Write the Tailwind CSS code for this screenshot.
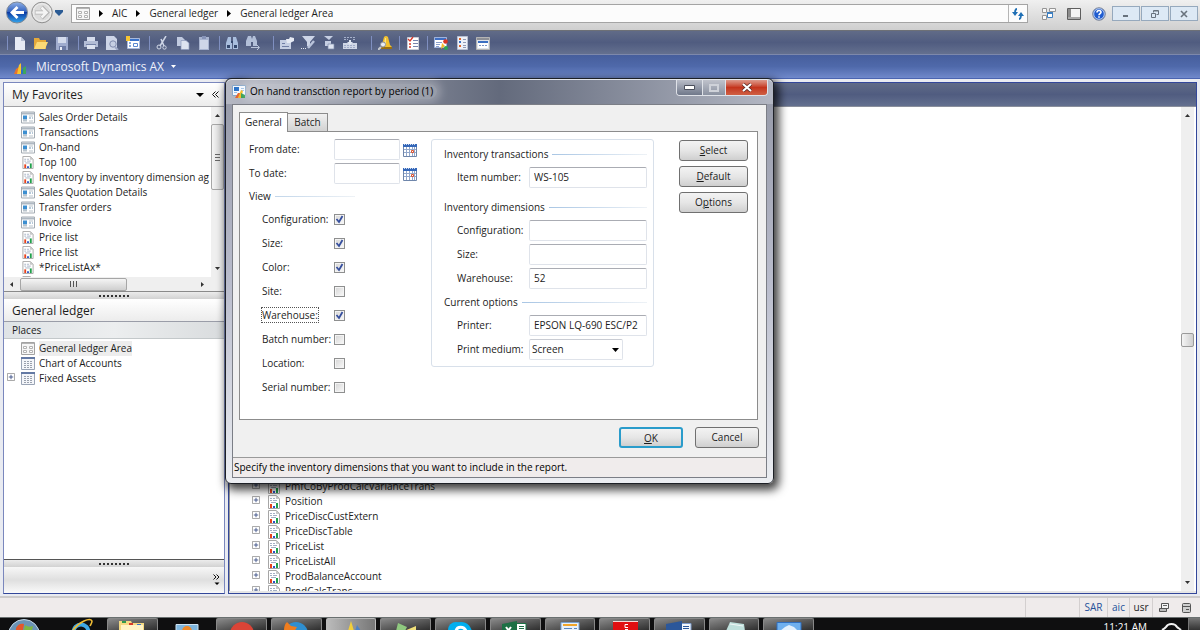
<!DOCTYPE html>
<html lang="en">

<head>
    <meta charset="UTF-8" />
    <meta name="viewport" content="width=device-width, initial-scale=1.0" />
    <script src="https://cdn.jsdelivr.net/npm/@tailwindcss/browser@4"></script>
    <title>Microsoft Dynamics AX</title>
</head>

<body class="h-screen flex flex-col overflow-hidden bg-[#e9ebf1] font-['Open_Sans','Noto_Sans',sans-serif] text-[10px] leading-[15px] text-[#1c1c1c]">

    <!-- icon sprites -->
    <svg class="hidden">
        <symbol id="form" viewBox="0 0 14 12">
            <path fill="#fff" stroke="#a3abb3" d="M.5.5h13v11H.5z" />
            <path fill="#aeb8c2" d="M1 1h12v2H1z" />
            <path fill="#3d8fd0" d="M2 4h4v4H2z" />
            <path fill="#b9c4cc" d="M2 8h4v2H2zM8 4h4v1H8zM8 9h4v1H8z" />
            <path fill="#6f93b3" d="M8 6h2v1H8zM11 6h1v1h-1z" />
        </symbol>
        <symbol id="report" viewBox="0 0 12 14">
            <path fill="#fff" stroke="#a6a6a6" d="M.5.5h8l3 3v10H.5z" />
            <path fill="#c8c8c8" d="M8 0v4h4z" />
            <path stroke="#a4b0c4" d="M2 3.500h2M5 3.500h2M2 5.500h2M5 5.500h4M3 7.500h5" />
            <path fill="#e8421c" d="M2 9h2v4H2z" />
            <path fill="#2a52c8" d="M5 11h2v2H5z" />
            <path fill="#1fa04a" d="M8 8h2v5H8z" />
        </symbol>
        <symbol id="area" viewBox="0 0 14 13">
            <path fill="#f6f6f6" stroke="#a2a2a2" d="M.5.5h13v12H.5z" />
            <path stroke="#b4b4b4" d="M1 1.500h12" />
            <path fill="#fff" stroke="#b2b2b2" d="M2.500 4.500h3v2h-3zM8.500 4.500h3v2h-3zM2.500 8.500h3v2h-3zM8.500 8.500h3v2h-3z" />
        </symbol>
        <symbol id="table" viewBox="0 0 14 13">
            <path fill="#f4f6fa" stroke="#9aa4b5" d="M.5.5h13v12H.5z" />
            <path stroke="#6379a4" stroke-width="2" d="M0 1h14" />
            <path stroke="#9aa1ad" stroke-dasharray="2 1" d="M3 4.500h8M3 6.500h8M3 8.500h8M3 10.500h8" />
        </symbol>
        <symbol id="plus" viewBox="0 0 9 9">
            <path fill="#fff" stroke="#9b9b9b" d="M.5.5h8v8h-8z" />
            <path stroke="#3c4f86" d="M2 4.500h5M4.500 2v5" />
        </symbol>
        <symbol id="calendar" viewBox="0 0 14 14">
            <path fill="#fff" stroke="#6f86ab" d="M.5 1.500h13v12H.5z" />
            <path fill="#3467b8" d="M0 1h14v3H0z" />
            <path stroke="#cfdcf2" stroke-dasharray="1 1" d="M1 1.500h12" />
            <path stroke="#93a8cb" d="M1 6.500h12M1 9.500h12M3.500 4v9M6.500 4v9M9.500 4v9M11.500 4v9" />
            <path fill="#fff" stroke="#e0532d" d="M8.500 7.500h2v2h-2z" />
        </symbol>
        <symbol id="charts" viewBox="0 0 14 14">
            <path fill="#f4f8fd" stroke="#88a7c8" d="M.5.5h13v10H.5z" />
            <path fill="#2a72c8" d="M2 2h5v4H2z" />
            <path stroke="#9ec0e4" d="M2 7.500h3M9 3.500h3M9 5.500h3" />
            <path fill="#e8622c" d="m3 13 3-5h3l-3 5z" />
            <path fill="#f6b91b" d="m6 13 3-8 2 1-2 7z" />
            <path fill="#2f9a4e" d="M9 13V8l4 2v3z" />
        </symbol>
    </svg>

    <!-- address bar -->
    <header class="h-[31px] flex items-start gap-[14px] pl-1 pt-1 border-b border-[#6d7076] bg-linear-to-b from-[#f0f0f0] to-[#cfcfcf]">
        <div class="flex items-center">
            <button aria-label="Back" class="-mt-1">
                <svg class="size-[25px]" viewBox="0 0 25 25">
                    <defs>
                        <linearGradient id="bk" x1="0" y1="0" x2="0" y2="1">
                            <stop offset="0" stop-color="#8fb0e6" /><stop offset=".48" stop-color="#2f5fbe" />
                            <stop offset=".5" stop-color="#0b3aa4" /><stop offset="1" stop-color="#35a8ee" />
                        </linearGradient>
                    </defs>
                    <circle cx="13" cy="12.500" r="10.500" fill="url(#bk)" stroke="#7c8797" />
                    <path fill="none" stroke="#fff" stroke-width="2.800" d="M20 12.500H8.500M13.500 7 8 12.500l5.500 5.500" />
                </svg>
            </button>
            <button aria-label="Forward" class="-mt-1">
                <svg class="size-[25px]" viewBox="0 0 25 25">
                    <circle cx="13" cy="12.500" r="10.300" fill="#dcdcdc" stroke="#8f8f8f" />
                    <circle cx="13" cy="12.500" r="8.800" fill="none" stroke="#efefef" />
                    <path fill="none" stroke="#b3b3b3" stroke-width="4" d="M6 12.500h12M12.500 7l5.500 5.500-5.500 5.500" />
                    <path fill="none" stroke="#f4f4f4" stroke-width="2.500" d="M6.500 12.500h11M12.500 7.500l5 5-5 5" />
                </svg>
            </button>
            <button aria-label="History" class="ml-px -mt-1"><svg class="w-2 h-[6px]" viewBox="0 0 8 6"><path fill="#2b5b94" d="M0 0h8v2L4 6 0 2z" /></svg></button>
        </div>
        <nav class="flex-1 flex h-[19px] -ml-[6px] border border-[#a4a4a4] bg-[#fcfcfc]">
            <ol class="flex-1 flex items-center pl-1 text-[10px]">
                <li><svg class="w-[14px] h-[13px]"><use href="#area" /></svg></li>
                <li class="w-[22px] pl-[7px]"><svg class="size-[7px]" viewBox="0 0 7 7"><path d="M2 0l4 3.500L2 7z" /></svg></li>
                <li><a href="#">AIC</a></li>
                <li class="w-[22px] pl-[7px]"><svg class="size-[7px]" viewBox="0 0 7 7"><path d="M2 0l4 3.500L2 7z" /></svg></li>
                <li><a href="#">General ledger</a></li>
                <li class="w-[22px] pl-[7px]"><svg class="size-[7px]" viewBox="0 0 7 7"><path d="M2 0l4 3.500L2 7z" /></svg></li>
                <li><a href="#">General ledger Area</a></li>
            </ol>
            <button aria-label="Refresh" class="w-[19px] flex items-center justify-center border-l border-[#b5b5b5]">
                <svg class="size-3" viewBox="0 0 12 12"><path fill="none" stroke="#1f6fb5" stroke-width="1.800" d="M5 1C3 1 3 3 3 6M7 11c2 0 2-2 2-5" /><path fill="#1f6fb5" d="M0 4h6L3 8zM6 8h6L9 4z" /></svg>
            </button>
        </nav>
        <div class="flex items-center h-[19px] gap-[11px]">
            <svg class="size-[14px]" viewBox="0 0 14 14"><path fill="#fafafa" stroke="#959595" d="M.5 1.500h4v4h-4zM7.500 1.500h6v3h-6zM.5 8.500h4v4h-4z" /><path fill="#fff" stroke="#3d7fc1" d="M5.500 5.500h5v5h-5z" /><path stroke="#3d7fc1" stroke-width="2" d="M5 6h6" /></svg>
            <svg class="size-[14px]" viewBox="0 0 14 14"><path fill="#f5f5f5" stroke="#5e5e5e" d="M.5 1.500h13v11H.5z" /><path fill="#8c8c8c" d="M1 2h3v8H1z" /><path fill="#aaa" d="M1 10h12v2H1z" /></svg>
            <svg class="size-[14px]" viewBox="0 0 14 14"><circle cx="7" cy="7" r="6.300" fill="#1f5cd0" stroke="#8a8f98" /><circle cx="7" cy="7" r="5.300" fill="none" stroke="#dfe8f6" stroke-width=".8" /><path fill="none" stroke="#fff" stroke-width="1.600" d="M5 5.500c0-2.600 4-2.600 4-.3C9 6.600 7 6.800 7 8.300M7 9.300v1.500" /></svg>
        </div>
        <div class="flex gap-px pr-[2px] pt-[2px] -ml-[8px]">
            <button aria-label="Minimize" class="w-7 h-[15px] flex items-center justify-center border border-[#96a9bd] bg-[#dde9f5]"><svg class="size-2" viewBox="0 0 8 8"><path fill="#68727d" d="M1 5h5v2H1z" /></svg></button>
            <button aria-label="Restore" class="w-7 h-[15px] flex items-center justify-center border border-[#96a9bd] bg-[#dde9f5]"><svg class="size-2" viewBox="0 0 8 8"><path fill="none" stroke="#68727d" d="M2.500 2.500v-2h5v4h-2M.5 3.500h4v4h-4zM3 1h4" /></svg></button>
            <button aria-label="Close" class="w-7 h-[15px] flex items-center justify-center border border-[#96a9bd] bg-[#dde9f5]"><svg class="size-2" viewBox="0 0 8 8"><path stroke="#68727d" stroke-width="1.600" d="M1 1l6 6M7 1 1 7" /></svg></button>
        </div>
    </header>

    <!-- toolbar -->
    <div class="h-[24px] flex items-center pl-[7px] border-b border-[#7d88ab] bg-linear-to-b from-[#616b87] via-[#505c80] to-[#64708f]">
        <div class="w-[71px] flex pl-px border-l border-[#7f8fc0]">
            <button aria-label="New" class="w-[21px] flex justify-center"><svg class="size-[14px]" viewBox="0 0 14 14"><path fill="#e6eaf4" d="M2 1h6l4 4v9H2z" /><path fill="#b4bdd2" d="M8 1v4h4z" /></svg></button>
            <button aria-label="Open" class="w-[21px] flex justify-center"><svg class="size-[14px]" viewBox="0 0 14 14"><path fill="#e5a93a" d="M0 2h5l1 2h6v9H0z" /><path fill="#fbd976" d="M3 6h11l-3 7H0z" /></svg></button>
            <button aria-label="Save" class="w-[21px] flex justify-center"><svg class="size-[14px]" viewBox="0 0 14 14"><path fill="#a0acce" d="M1 1h12v13H1z" /><path fill="#d4dbec" d="M3 1h8v6H3z" /><path fill="#6d7ba5" d="M4 10h7v4H4z" /><path fill="#e9edf6" d="M5 11h2v3H5z" /></svg></button>
        </div>
        <div class="w-[71px] flex pl-px border-l border-[#7f8fc0]">
            <button aria-label="Print" class="w-[21px] flex justify-center"><svg class="size-[14px]" viewBox="0 0 14 14"><path fill="#d5dcec" d="M3 1h8v4H3z" /><path fill="#b3bdd6" d="M0 5h14v6H0z" /><path fill="#dde3f0" d="M3 9h8v4H3z" /><path stroke="#7583a8" d="M2 8.500h10" /></svg></button>
            <button aria-label="Print preview" class="w-[21px] flex justify-center"><svg class="size-[14px]" viewBox="0 0 14 14"><path fill="#cdd5e7" d="M1 0h8l3 3v11H1z" /><circle cx="8" cy="8" r="3.200" fill="#c5cee3" stroke="#7f8aad" /><path stroke="#9aa5c4" stroke-width="2" d="m10 11 3 3" /></svg></button>
            <button aria-label="New window" class="w-[21px] flex justify-center"><svg class="size-[14px]" viewBox="0 0 14 14"><path fill="#fff" stroke="#a8b9dc" d="M1.500 2.500h12v10h-12z" /><path fill="#3a72c9" d="M2 3h11v2H2z" /><path fill="#fff" stroke="#5a88d0" d="M7.500 7.500h4v3h-4z" /><path fill="#87a8dc" d="M3 6h2v2H3zM3 9h2v2H3z" /><path fill="#f7c531" d="M0 0h4v5H0z" /></svg></button>
        </div>
        <div class="w-[70px] flex pl-px border-l border-[#7f8fc0]">
            <button aria-label="Cut" class="w-[21px] flex justify-center"><svg class="size-[14px]" viewBox="0 0 14 14"><path fill="none" stroke="#cfd6e6" stroke-width="1.500" d="M11 0 5 10M6 3l3 7" /><circle cx="4" cy="11" r="2" fill="none" stroke="#cfd6e6" /><circle cx="9.500" cy="11.500" r="1.700" fill="none" stroke="#cfd6e6" /></svg></button>
            <button aria-label="Copy" class="w-[21px] flex justify-center"><svg class="size-[14px]" viewBox="0 0 14 14"><path fill="#c0cae0" d="M1 1h5l3 3v6H1z" /><path fill="#dde3f0" stroke="#8b98ba" stroke-width=".7" d="M5 4.500h5L13 7v6.500H5z" /></svg></button>
            <button aria-label="Paste" class="w-[21px] flex justify-center"><svg class="size-[14px]" viewBox="0 0 14 14"><path fill="#a8b4d0" d="M2 1h10v13H2z" /><path fill="#ced6e8" d="M3 4h8v9H3z" /><path fill="#8794b8" d="M5 0h4v3H5z" /></svg></button>
        </div>
        <div class="w-[54px] flex pl-px border-l border-[#7f8fc0]">
            <button aria-label="Find" class="w-[21px] flex justify-center"><svg class="size-[14px]" viewBox="0 0 14 14"><path fill="#a9bede" d="M3 1h3v4l1 2v6H1V7zM8 1h3l2 6v6H8z" /><path fill="#34486f" d="M2 9h3v3H2zM9 9h3v3H9zM6 5h2v2H6z" /></svg></button>
            <button aria-label="Find next" class="w-[21px] flex justify-center"><svg class="size-[14px]" viewBox="0 0 14 14"><path fill="#b2bfd8" d="M2 0h3l1 3 1-3h2l2 5v5H7V6H5v4H0V5z" /><path fill="none" stroke="#b9c4da" d="M5 11.500h8M11 9l2.500 2.500L11 14" /></svg></button>
        </div>
        <div class="w-[98px] flex pl-[2px] border-l border-[#7f8fc0]">
            <button aria-label="Properties" class="w-[21px] flex justify-center"><svg class="size-[14px]" viewBox="0 0 14 14"><path fill="#c6cfe3" d="M0 4h11v9H0z" /><path fill="#e6eaf3" d="M6 3h3l1-2 4 1v3l-4 2H7z" /><path stroke="#707ea4" d="M2 7.500h3M2 10.500h7" /></svg></button>
            <button aria-label="Filter" class="w-[21px] flex justify-center"><svg class="size-[14px]" viewBox="0 0 14 14"><path fill="#cdd5e7" d="M1 0h13L9 6v6l-3-2V6z" /><path stroke="#b9c3da" stroke-width="2.500" d="m7 12 6-7" /><path fill="#e5e9f3" d="M0 12h1v1H0zM2 12h1v1H2zM4 12h1v1H4z" /></svg></button>
            <button aria-label="Remove filter" class="w-[21px] flex justify-center"><svg class="size-[14px]" viewBox="0 0 14 14"><path fill="#c6cfe3" d="M2 0h9L7 4zM3 5h6v5H3z" /><path fill="#dde3f0" stroke="#7d89ab" stroke-width=".7" d="M6 8h6v5H6z" /></svg></button>
            <button aria-label="Records" class="w-[21px] flex justify-center"><svg class="size-[14px]" viewBox="0 0 14 14"><path fill="#cfd6e6" d="M0 7h14v6H0z" /><path fill="none" stroke="#a5b0ca" stroke-dasharray="2 1" d="M1 1.500h12M1 3.500h4M10 3.500h3" /><path fill="#dfe5f1" d="M6 4h2v2h2L7 9 4 6h2z" /><path stroke="#a0abc8" stroke-dasharray="2 1" d="M1 9.500h12M1 11.500h12" /></svg></button>
        </div>
        <div class="w-[28px] flex pl-[2px] border-l border-[#7f8fc0]">
            <button aria-label="Alerts" class="w-[21px] flex justify-center"><svg class="size-[14px]" viewBox="0 0 14 14"><path fill="#f2c12e" d="M6 1q2-2 4 0l2 8 2 2v1H3z" /><path fill="#fbe48a" d="M7 2h1v7H6z" /><path fill="#9a7010" d="M3 11h11v2H3z" /><circle cx="5" cy="8.500" r="2.500" fill="#e8edf3" stroke="#8b8f98" /><path stroke="#c4c8ce" stroke-width="2" d="m3 11-3 3" /></svg></button>
        </div>
        <div class="w-[28px] flex pl-[2px] border-l border-[#7f8fc0]">
            <button aria-label="Tasks" class="w-[21px] flex justify-center"><svg class="size-[14px]" viewBox="0 0 14 14"><path fill="#fff" stroke="#c8ccd6" d="M1.500 1.500h11v12h-11z" /><path fill="none" stroke="#d93a2b" stroke-width="1.300" d="m2 3 2 2 3-4M3 8h2M3 11h2" /><path stroke="#7785ad" d="M7 4.500h5M7 7.500h5M7 10.500h5" /></svg></button>
        </div>
        <div class="flex pl-[2px] border-l border-[#7f8fc0]">
            <button aria-label="Personalize" class="w-[21px] flex justify-center"><svg class="size-[14px]" viewBox="0 0 14 14"><path fill="#fff" stroke="#9fb3dc" d="M.5 1.500h12v10H.5z" /><path fill="#3f6fc4" d="M1 2h11v2H1z" /><path stroke="#8a9fcb" d="M2 6.500h6M2 8.500h4M2 10.500h3" /><circle cx="11.500" cy="5.500" r="2.300" fill="#dc3522" /><path fill="#f3b92a" d="m8 7 3 3-4 3z" /><circle cx="12" cy="12" r="2" fill="#2fa552" /></svg></button>
            <button aria-label="List" class="w-[21px] flex justify-center"><svg class="size-[14px]" viewBox="0 0 14 14"><path fill="#eef1f8" stroke="#b7bfd2" d="M2.500.5h10v13h-10z" /><path fill="#e0662a" d="M4 2h2v2H4zM4 9h2v2H4z" /><path fill="#3c72c4" d="M4 5h2v2H4z" /><path stroke="#8f99b4" d="M8 3.500h3M8 6.500h3M8 9.500h3M8 11.500h3" /></svg></button>
            <button aria-label="Window" class="w-[21px] flex justify-center"><svg class="size-[14px]" viewBox="0 0 14 14"><path fill="#dfe3ea" stroke="#b4b4b4" d="M.5 1.500h13v12H.5z" /><path fill="#8c8f96" d="M1 2h12v2H1z" /><path fill="#fff" d="M2 6h10v6H2z" /><path fill="#3c6fc2" d="M2 5h10v2H2z" /><path stroke="#7e95c6" stroke-dasharray="2 1" d="M3 9.500h8" /></svg></button>
        </div>
    </div>

    <!-- product menu -->
    <div class="h-[24px] flex items-center gap-[9px] pl-[14px] border-b border-[#4a64b0] bg-linear-to-b from-[#465e9c] via-[#4f69aa] to-[#7089cb]">
        <svg class="w-[13px] h-3 mt-1" viewBox="0 0 13 12"><path fill="#e8742c" d="M0 11 2 6l3-2-1 7z" /><path fill="#f7c52f" d="m3 11 2-9 2-2v11z" /><path fill="#2c70c4" d="M7 11V7l2-1v5z" /><path fill="#3fa65b" d="M9 11V5l3-2v8z" /></svg>
        <button class="flex items-center gap-[7px] text-[12px] text-[#eef1fa]">Microsoft Dynamics AX
            <svg class="w-[5px] h-[3px]" viewBox="0 0 5 3"><path fill="#fff" d="M0 0h5L2.500 3z" /></svg>
        </button>
    </div>

    <main class="flex-1 min-h-0 flex gap-[3px] px-[3px] pt-[3px] pb-[2px]">
        <!-- navigation pane -->
        <aside class="w-[222px] flex flex-col border border-[#7a87bd] border-b-[#33479a] bg-white">
            <div class="h-6 flex items-center pl-[8px] pr-[5px] border-b border-[#a0a0a4] bg-linear-to-b from-white to-[#ececec]">
                <h2 class="flex-1 text-[12px]">My Favorites</h2>
                <button aria-label="Favorites menu"><svg class="w-2 h-1" viewBox="0 0 8 4"><path d="M0 0h8L4 4z" /></svg></button>
                <button aria-label="Collapse" class="ml-2"><svg class="w-[7px] h-[7px]" viewBox="0 0 7 7"><path fill="none" stroke="#111" d="M3.500.5l-3 3 3 3M6.500.5l-3 3 3 3" /></svg></button>
            </div>
            <div class="h-[170px] flex">
                <ul id="favorites" class="flex-1 min-w-0 overflow-hidden pt-[3px]"></ul>
                <div class="w-[13px] flex flex-col items-center bg-[#efefef]">
                    <svg class="w-[5px] h-[17px]" viewBox="0 0 5 17"><path fill="#333" d="M0 10h5L2.500 7z" /></svg>
                    <div class="w-full h-[66px] flex items-center justify-center rounded-xs border border-[#a6a6a6] bg-linear-to-r from-[#f5f5f5] to-[#cfcfcf]">
                        <svg class="w-[5px] h-[7px]" viewBox="0 0 5 7"><path stroke="#666" d="M0 .5h5M0 3.500h5M0 6.500h5" /></svg>
                    </div>
                    <div class="flex-1"></div>
                    <svg class="w-[5px] h-[17px]" viewBox="0 0 5 17"><path fill="#333" d="M0 7h5L2.500 10z" /></svg>
                </div>
            </div>
            <div class="h-[14px] flex items-center pr-[13px] bg-[#efefef]">
                <svg class="w-4 h-[7px]" viewBox="0 0 16 7"><path fill="#333" d="M9 1v5L6 3.500z" /></svg>
                <div class="w-[107px] h-[13px] flex items-center justify-center rounded-xs border border-[#a6a6a6] bg-linear-to-b from-[#f5f5f5] to-[#cfcfcf]">
                    <svg class="w-[7px] h-[6px]" viewBox="0 0 7 6"><path stroke="#555" d="M.5 0v6M3.500 0v6M6.500 0v6" /></svg>
                </div>
                <div class="flex-1"></div>
                <svg class="w-4 h-[7px]" viewBox="0 0 16 7"><path fill="#333" d="M6 1v5l3-2.500z" /></svg>
            </div>
            <div class="h-[8px] flex items-center justify-center border-t border-[#8a8a8a] bg-linear-to-b from-[#ececec] to-[#d2d2d2]">
                <div class="w-[30px] border-t-2 border-dotted border-[#333]"></div>
            </div>
            <h2 class="h-[23px] flex items-center pl-[8px] border-b border-[#9a9da8] text-[12px] bg-linear-to-b from-white to-[#ececec]">General ledger</h2>
            <h3 class="h-[17px] flex items-center pl-[8px] border-b border-[#c3c8ca] bg-linear-to-r from-[#dfe3e6] via-[#eceeef] to-[#d9dcde]">Places</h3>
            <ul class="flex-1 pt-[2px]">
                <li class="h-[15px] flex items-center pl-[17px]"><svg class="w-[14px] h-[13px]"><use href="#area" /></svg><a href="#" class="ml-1 bg-[#ededed]">General ledger Area</a></li>
                <li class="h-[15px] flex items-center pl-[17px]"><svg class="w-[14px] h-[13px]"><use href="#table" /></svg><a href="#" class="ml-1">Chart of Accounts</a></li>
                <li class="h-[15px] flex items-center pl-[3px]"><button aria-label="Expand"><svg class="size-2 -mt-1"><use href="#plus" /></svg></button><svg class="w-[14px] h-[13px] ml-[6px]"><use href="#table" /></svg><a href="#" class="ml-1">Fixed Assets</a></li>
            </ul>
            <div class="h-[8px] flex items-center justify-center border-t border-[#555] bg-linear-to-b from-[#ececec] to-[#d2d2d2]">
                <div class="w-[30px] border-t-2 border-dotted border-[#333]"></div>
            </div>
            <div class="h-[26px] flex items-center justify-end pr-1 bg-linear-to-b from-[#f7f7f7] via-[#dfdfdf] to-[#fafafa]">
                <button aria-label="More"><svg class="w-[7px] h-[12px]" viewBox="0 0 7 12"><path fill="none" stroke="#111" d="M.5.5 3 3 .5 5.500M3.500.5 6 3 3.500 5.500" /><path d="M1.500 8.500h5L4 11z" /></svg></button>
            </div>
        </aside>

        <!-- area page, mostly behind the dialog -->
        <section class="flex-1 flex flex-col border border-[#33479a] bg-white">
            <div class="h-6 border-b border-[#8a8f9c] bg-linear-to-b from-[#616b87] via-[#505c80] to-[#64708f]"></div>
            <div class="flex-1 min-h-0 flex border-b-2 border-[#e6e6e6] pr-[2px]">
                <div class="flex-1 flex flex-col justify-end overflow-hidden border-l border-[#9a9a9a]">
                    <ul id="reports" class="-mb-2"></ul>
                </div>
                <div class="w-[13px] flex flex-col items-center bg-[#efefef]">
                    <svg class="w-[5px] h-[17px]" viewBox="0 0 5 17"><path fill="#333" d="M0 10h5L2.500 7z" /></svg>
                    <div class="flex-12"></div>
                    <div class="w-full h-[14px] rounded-xs border border-[#9a9a9a] bg-linear-to-r from-[#f5f5f5] to-[#cfcfcf]"></div>
                    <div class="flex-13"></div>
                    <svg class="w-[5px] h-[17px]" viewBox="0 0 5 17"><path fill="#333" d="M0 7h5L2.500 10z" /></svg>
                </div>
            </div>
        </section>
    </main>

    <!-- status bar -->
    <footer class="h-[21px] flex justify-end border-t-2 border-[#cdcbcb] bg-[#efebeb]">
        <div class="w-[54px] border-l border-[#d3cfcf]"></div>
        <div class="w-[28px] flex items-center justify-center border-l border-[#d3cfcf] text-[#24509a]">SAR</div>
        <div class="w-[22px] flex items-center justify-center border-l border-[#d3cfcf] text-[#24509a]">aic</div>
        <div class="w-[23px] flex items-center justify-center border-l border-[#d3cfcf]">usr</div>
        <div class="w-[48px] flex items-center gap-3 pl-[6px] border-l border-[#d3cfcf]">
            <svg class="size-[10px]" viewBox="0 0 10 10"><path fill="#f4f4f4" stroke="#555" d="M2.500.5h7v5h-7z" /><path fill="#bbb" stroke="#555" d="M.5 5.500h7v3h-7z" /><path stroke="#666" d="M4 2.500h4" /></svg>
            <svg class="size-[10px]" viewBox="0 0 10 10"><rect x="1.500" y=".5" width="8" height="9" rx="1" fill="#cfcfcf" stroke="#555" /><path stroke="#555" d="M2 3.500h7M5 6.500h3" /></svg>
        </div>
    </footer>

    <!-- taskbar -->
    <div class="h-[13px] flex overflow-hidden border-t border-[#6a7070] bg-[#0f0f10] text-white">
        <div class="w-[107px] h-3 flex pl-2 gap-[30px]">
            <button aria-label="Start"><svg class="w-8 h-3" viewBox="0 0 32 12"><circle cx="16" cy="17" r="15.500" fill="#6b93b4" stroke="#c4d6e4" /><path fill="#e4572a" d="M8 10c2-4 5-5 8-4l-1 6H8z" /><path fill="#7fb841" d="M17 7c3 2 5 2 8 1l-1 4h-8z" /></svg></button>
            <button aria-label="Internet Explorer"><svg class="w-6 h-3" viewBox="0 0 24 12"><circle cx="11" cy="14" r="7.500" fill="none" stroke="#3fa7e4" stroke-width="4" /><path fill="none" stroke="#eebb35" stroke-width="1.600" d="M3 12C9 4 20-1 22 3c0 2-1 3-2 5" /></svg></button>
        </div>
        <div id="tasks" class="w-[707px] h-3 grid grid-cols-[repeat(13,minmax(0,1fr))] gap-1"></div>
        <div class="flex-1 flex justify-end pt-[2px] pr-[54px] text-[10px]">11:21 AM</div>
        <svg class="w-6 h-3 -ml-[41px]" viewBox="0 0 24 12"><path fill="none" stroke="#f2f2f2" stroke-width="2" d="M2 12c2-1 3-2 4-3 2-4 9-4 11 0 1 1 3 2 4 3" /></svg>
        <div class="w-3 ml-1 border-l border-[#777] bg-linear-to-b from-[#777] to-[#333]"></div>
    </div>

    <!-- report dialog -->
    <form class="absolute left-[225px] top-[78px] w-[549px] flex flex-col px-[6px] pb-[5px] rounded-md border border-[#1d2026] bg-linear-to-b from-[#9498a6] via-[#b9bccc] to-[#eceef2] shadow-[3px_4px_10px_2px_rgba(0,0,0,0.75)]">
        <div class="h-[25px] flex items-start gap-1 -mx-[6px] pl-[6px] rounded-t-md border-t border-[#e4e6ec] bg-linear-to-r from-[#b5b8c3] via-[#636a7c] to-[#b3b7c3]">
            <svg class="size-[14px] mt-[5px]"><use href="#charts" /></svg>
            <h1 class="mt-1 px-1 -ml-1 rounded-full text-[10px] text-black bg-white/25 shadow-[0_0_8px_4px_rgba(255,255,255,0.25)]">On hand transction report by period (1)</h1>
            <div class="flex ml-auto mr-[5px] rounded-b-[4px] border border-t-0 border-[#dfe2e8]">
                <button type="button" aria-label="Minimize" class="w-[25px] h-[15px] flex items-center justify-center bg-linear-to-b from-[#b9bdc8] to-[#70788a] rounded-bl-[3px]"><svg class="w-[11px] h-[5px]" viewBox="0 0 11 5"><path fill="#fff" stroke="#4a4f5c" d="M.5.5h10v4H.5z" /></svg></button>
                <button type="button" aria-label="Maximize" class="w-[24px] h-[15px] flex items-center justify-center border-x border-[#dfe2e8] bg-linear-to-b from-[#bfc2cb] to-[#8b92a1]"><svg class="w-[10px] h-[8px]" viewBox="0 0 10 8"><path fill="none" stroke="#cfd2d9" stroke-width="2" d="M1 1h8v6H1z" /></svg></button>
                <button type="button" aria-label="Close" class="w-[41px] h-[15px] flex items-center justify-center bg-linear-to-b from-[#dc9a8c] via-[#c4341c] to-[#cf5f43] rounded-br-[3px]"><svg class="w-[10px] h-[9px]" viewBox="0 0 10 9"><path stroke="#5b2a24" stroke-width="3.600" d="m1 1 8 7M9 1 1 8" /><path stroke="#fff" stroke-width="2.200" d="m1 1 8 7M9 1 1 8" /></svg></button>
            </div>
        </div>
        <div class="flex flex-col border border-[#7b7e86] bg-[#f0f0f0]">
            <div class="flex items-end pt-[7px] px-[6px]">
                <button type="button" role="tab" class="w-[49px] h-5 -mb-px pb-px border border-b-0 border-[#8c8c8c] bg-white z-10">General</button>
                <button type="button" role="tab" class="w-10 h-[18px] border border-l-0 border-b-0 border-[#8c8c8c] bg-linear-to-b from-[#f1f1f1] to-[#d2d2d2]">Batch</button>
            </div>
            <div class="h-[289px] ml-[6px] mr-2 flex pt-[7px] pl-[9px] pr-[9px] border border-[#8c8c8c] bg-white">
                <!-- dates and view -->
                <div class="w-[182px]">
                    <div class="h-[21px] flex items-center">
                        <label for="from" class="w-[85px]">From date:</label>
                        <input id="from" type="text" class="w-[66px] h-[21px] rounded-[2px] border border-[#dfe3ea] border-t-[#aaacb3]" />
                        <button type="button" aria-label="Pick from date" class="ml-[3px]"><svg class="size-[14px]"><use href="#calendar" /></svg></button>
                    </div>
                    <div class="h-[21px] mt-[3px] flex items-center">
                        <label for="to" class="w-[85px]">To date:</label>
                        <input id="to" type="text" class="w-[66px] h-[21px] rounded-[2px] border border-[#dfe3ea] border-t-[#aaacb3]" />
                        <button type="button" aria-label="Pick to date" class="ml-[3px]"><svg class="size-[14px]"><use href="#calendar" /></svg></button>
                    </div>
                    <fieldset class="mt-[5px]">
                        <legend class="w-[106px] flex items-center gap-1">View <span class="flex-1 h-px bg-linear-to-r from-[#c2d6ea] to-[#eef2f6]"></span></legend>
                        <div id="view" class="pt-[3px]"></div>
                    </fieldset>
                </div>
                <!-- selection -->
                <div class="w-[223px] h-[228px] pt-1 pl-3 pr-[6px] rounded-[3px] border border-[#d8e0ea]">
                    <h3 class="h-5 flex items-center gap-1">Inventory transactions <span class="flex-1 h-px bg-linear-to-r from-[#a9c6e4] to-[#eef2f6]"></span></h3>
                    <div class="mt-[3px] flex items-center pl-[13px]">
                        <label for="item" class="flex-1">Item number:</label>
                        <input id="item" type="text" value="WS-105" class="w-[118px] h-[21px] px-1 pb-px rounded-[2px] border border-[#dfe3ea] border-t-[#aaacb3]" />
                    </div>
                    <h3 class="h-5 mt-[9px] flex items-center gap-1">Inventory dimensions <span class="flex-1 h-px bg-linear-to-r from-[#a9c6e4] to-[#eef2f6]"></span></h3>
                    <div class="mt-[3px] flex items-center pl-[13px]">
                        <label for="config" class="flex-1">Configuration:</label>
                        <input id="config" type="text" class="w-[118px] h-[21px] px-1 pb-px rounded-[2px] border border-[#dfe3ea] border-t-[#aaacb3]" />
                    </div>
                    <div class="mt-[3px] flex items-center pl-[13px]">
                        <label for="size" class="flex-1">Size:</label>
                        <input id="size" type="text" class="w-[118px] h-[21px] px-1 pb-px rounded-[2px] border border-[#dfe3ea] border-t-[#aaacb3]" />
                    </div>
                    <div class="mt-[3px] flex items-center pl-[13px]">
                        <label for="warehouse" class="flex-1">Warehouse:</label>
                        <input id="warehouse" type="text" value="52" class="w-[118px] h-[21px] px-1 pb-px rounded-[2px] border border-[#dfe3ea] border-t-[#aaacb3]" />
                    </div>
                    <h3 class="h-5 mt-[3px] flex items-center gap-1">Current options <span class="flex-1 h-px bg-linear-to-r from-[#a9c6e4] to-[#eef2f6]"></span></h3>
                    <div class="mt-[3px] flex items-center pl-[13px]">
                        <label for="printer" class="flex-1">Printer:</label>
                        <input id="printer" type="text" value="EPSON LQ-690 ESC/P2" class="w-[118px] h-[21px] px-1 pb-px rounded-[2px] border border-[#dfe3ea] border-t-[#aaacb3]" />
                    </div>
                    <div class="mt-[3px] flex items-center pl-[13px]">
                        <label for="medium" class="flex-1">Print medium:</label>
                        <div class="relative w-[118px]">
                            <select id="medium" class="block appearance-none w-[94px] h-[21px] px-[2px] rounded-[2px] border border-[#dfe3ea] border-t-[#c9ccd3] bg-white">
                                <option>Screen</option>
                            </select>
                            <svg class="absolute left-[83px] top-[9px] w-[7px] h-1 pointer-events-none" viewBox="0 0 7 4"><path d="M0 0h7L3.500 4z" /></svg>
                        </div>
                    </div>
                </div>
                <div class="flex-1 flex flex-col items-end gap-[5px] pt-px">
                    <button type="button" class="w-[69px] h-[21px] rounded-[3px] border border-[#707070] bg-linear-to-b from-[#f3f3f3] via-[#e6e6e6] to-[#cfcfcf]"><u>S</u>elect</button>
                    <button type="button" class="w-[69px] h-[21px] rounded-[3px] border border-[#707070] bg-linear-to-b from-[#f3f3f3] via-[#e6e6e6] to-[#cfcfcf]"><u>D</u>efault</button>
                    <button type="button" class="w-[69px] h-[21px] rounded-[3px] border border-[#707070] bg-linear-to-b from-[#f3f3f3] via-[#e6e6e6] to-[#cfcfcf]">O<u>p</u>tions</button>
                </div>
            </div>
            <div class="flex justify-end gap-3 pt-[7px] pb-[9px] pr-[7px]">
                <button type="submit" class="w-16 h-[21px] rounded-[3px] border-2 border-[#2a9ccb] bg-linear-to-b from-[#f3f3f3] via-[#e6e6e6] to-[#cfcfcf] leading-none"><u>O</u>K</button>
                <button type="button" class="w-16 h-[21px] rounded-[3px] border border-[#707070] bg-linear-to-b from-[#f3f3f3] via-[#e6e6e6] to-[#cfcfcf]">Cancel</button>
            </div>
            <p class="h-5 flex items-center pl-px border-t border-[#9a9a9a] bg-[#f0ecec] text-black">Specify the inventory dimensions that you want to include in the report.</p>
        </div>
    </form>

    <script>
        const favorites = [
            ['form', 'Sales Order Details'],
            ['form', 'Transactions'],
            ['form', 'On-hand'],
            ['report', 'Top 100'],
            ['report', 'Inventory by inventory dimension ag'],
            ['form', 'Sales Quotation Details'],
            ['form', 'Transfer orders'],
            ['form', 'Invoice'],
            ['report', 'Price list'],
            ['report', 'Price list'],
            ['report', '*PriceListAx*'],
            ['report', ''],
        ];
        document.getElementById('favorites').innerHTML = favorites.map(([icon, name]) => `
            <li class="h-[15px] flex items-center pl-[17px] whitespace-nowrap">
                <svg class="w-[14px] h-[13px]"><use href="#${icon}" /></svg>
                <a href="#" class="ml-1">${name}</a>
            </li>`).join('');

        const reports = ['PmfCoByProdCalcVarianceTrans', 'Position', 'PriceDiscCustExtern', 'PriceDiscTable',
            'PriceList', 'PriceListAll', 'ProdBalanceAccount', 'ProdCalcTrans'];
        document.getElementById('reports').innerHTML = reports.map(name => `
            <li class="h-[15px] flex items-center pl-[22px]">
                <button aria-label="Expand"><svg class="size-2 -mt-1"><use href="#plus" /></svg></button>
                <svg class="w-[12px] h-[14px] ml-2"><use href="#report" /></svg>
                <a href="#" class="ml-[5px]">${name}</a>
            </li>`).join('');

        const view = [['Configuration', true], ['Size', true], ['Color', true], ['Site', false],
            ['Warehouse', true], ['Batch number', false], ['Location', false], ['Serial number', false]];
        document.getElementById('view').innerHTML = view.map(([name, on], i) => `
            <div class="h-6 flex items-center pl-[13px]">
                <span class="w-[72px]"><label for="v${i}" class="${name === 'Warehouse' ? 'outline-1 outline-dotted outline-[#555]' : ''}">${name}:</label></span>
                <span class="grid place-items-center">
                    <input id="v${i}" type="checkbox" ${on ? 'checked' : ''} class="peer appearance-none size-[11px] [grid-area:1/1] border border-[#8e8f8f] bg-linear-to-br from-[#d5d5d5] to-[#fafafa] shadow-[inset_0_0_0_1px_#f4f4f4]" />
                    <svg class="size-[9px] [grid-area:1/1] hidden peer-checked:block pointer-events-none" viewBox="0 0 9 9"><path fill="none" stroke="#364f9e" stroke-width="1.800" d="M1.500 4 4 7l3.500-6" /></svg>
                </span>
            </div>`).join('');

        // running programs, left to right
        const art = [
            '<path fill="#f3d983" d="M1 2h12l1 2h12v8H1z"/><path fill="#fff3c4" d="M3 6h22v6H3z"/><path fill="#2f9a4e" d="M4 2h4v2H4z"/><path fill="#d93a2b" d="M11 4h4v2h-4z"/><path fill="#3a72c9" d="M19 5h4v1h-4z"/>',
            '<path fill="#7fb6de" stroke="#cfe4f3" d="M3 6.500h22v8H3z"/><circle cx="14" cy="13" r="5" fill="#ef8a2b"/>',
            '<circle cx="14" cy="15" r="12" fill="#db4437"/><circle cx="14" cy="16" r="5" fill="#fff"/>',
            '<circle cx="14" cy="15" r="12" fill="#2f8fd0"/><path fill="#ef7d1e" d="M2 12c0-6 2-8 3-9l4 4 6 1-3 5H2z"/>',
            '<path fill="#f2cf3a" d="m11 12 3-10 3 10z"/><path fill="#4d84c8" d="m18 12 2-6 4 6z"/>',
            '<path fill="#8fc97f" d="m4 12 2-8 9 4-2 4z"/><path fill="#f0e07a" d="m12 12 12-5v5z"/>',
            '<circle cx="10" cy="11" r="8" fill="#00aff0"/><circle cx="15" cy="14" r="11" fill="#00aff0"/><path fill="none" stroke="#fff" stroke-width="3" d="M10 12c1-5 8-5 10 0"/>',
            '<path fill="#fff" stroke="#1d7044" d="M13 4.500h12v9H13z"/><path fill="#1d7044" d="m1 5 15-3v11H1z"/><path stroke="#1d7044" d="M18 7.500h5M18 9.500h5"/><path fill="none" stroke="#fff" stroke-width="2" d="m5 8 3 4M10 8l-3 4"/>',
            '<path fill="#e8f0f8" stroke="#7aa3cf" d="M5 3.500h18v9H5z"/><path fill="#f0a52a" d="M7 5h14v2H7z"/><path stroke="#5a86bd" d="M8 9.500h8M18 9.500h3"/>',
            '<path fill="#e10f12" d="M2 3h25v10H2z"/><path fill="#f6dada" d="M2 2h25v1H2z"/><path fill="none" stroke="#fff" d="M17 5.500h-3v3h3M14 10.500h3"/>',
            '<path fill="#f4f7fb" stroke="#7f9ccb" d="M14 4.500h12v9H14z"/><path fill="#2b579a" d="m1 5 16-3v11H1z"/><path stroke="#2b579a" d="M18 7.500h6M18 9.500h6"/>',
            '<path fill="#bfe0dc" d="m6 12 4-9 14 2 1 7z"/><path stroke="#f0f6f6" d="m10 5 13 2"/>',
            '<path fill="#6fb0ee" stroke="#2f6fc0" d="M2 3.500h24v9H2z"/><path fill="#e4f1fc" d="m5 12 5-4 4-2 5 2 4 4z"/>',
        ];
        document.getElementById('tasks').innerHTML = art.map((d, i) => `
            <button class="h-3 flex justify-center ${i === 1 ? '' : i === 4 ? 'rounded-t-xs border border-b-0 border-[#bbb] bg-linear-to-r from-[#bbb] to-[#777]' : 'rounded-t-xs border border-b-0 border-[#888] bg-linear-to-br from-[#8a8a8a] to-[#2f2f2f]'}">
                <svg class="w-7 h-3" viewBox="0 0 28 12">${d}</svg>
            </button>`).join('');
    </script>
</body>

</html>
